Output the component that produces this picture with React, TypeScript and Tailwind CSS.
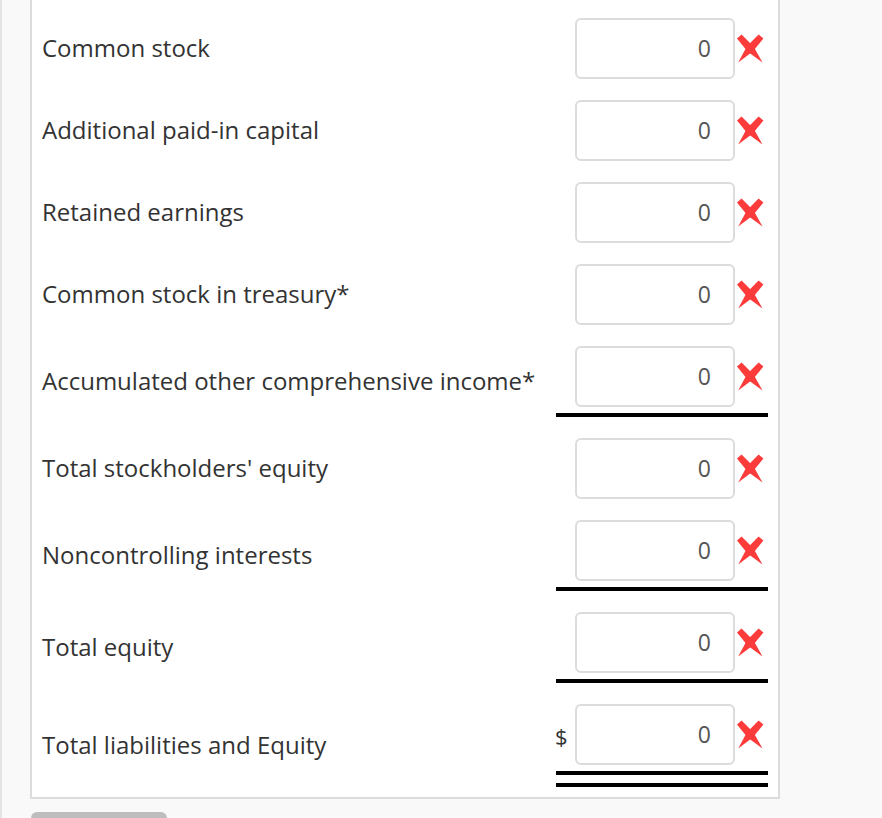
import React from "react";

type Row = { label: string; dollar?: boolean; lines?: 0 | 1 | 2 };

const rows: Row[] = [
  { label: "Common stock" },
  { label: "Additional paid-in capital" },
  { label: "Retained earnings" },
  { label: "Common stock in treasury*" },
  { label: "Accumulated other comprehensive income*", lines: 1 },
  { label: "Total stockholders' equity" },
  { label: "Noncontrolling interests", lines: 1 },
  { label: "Total equity", lines: 1 },
  { label: "Total liabilities and Equity", dollar: true, lines: 2 },
];

function RedX() {
  return (
    <svg width="27" height="29" viewBox="0 0 27 29" className="block">
      <polygon points="4.6,0.5 16.5,12.4 25.5,28.5 10.5,17.6 0,4.6" fill="#fc3b3b" />
      <polygon points="21.6,0.5 26.4,4.6 15.8,17.6 1.2,28.5 9.8,12.4" fill="#fc3b3b" />
    </svg>
  );
}

export default function App() {
  return (
    <div
      className="min-h-[818px] w-full bg-[#f9f9f9] border-l-2 border-[#e4e4e4] pl-[28px] overflow-hidden"
      style={{ fontFamily: '"Open Sans", "Liberation Sans", sans-serif' }}
    >
      <div className="w-[750px] bg-white border-x-2 border-b-2 border-[#dcdcdc] pt-[18px] pb-[10px] pl-[10px] pr-[10px] flex flex-col gap-[21px]">
        {rows.map((r) => (
          <div key={r.label} className="flex items-center">
            <div className="flex-1 text-[24px] leading-[32px] text-[#333] -mt-[2px]">{r.label}</div>
            <div className="w-[212px] flex flex-col">
              <div className="flex items-center">
                <div className="w-[20px] text-[22px] text-[#333] leading-none -ml-[1px] mt-[2px]">
                  {r.dollar ? "$" : ""}
                </div>
                <div className="w-[160px] h-[61px] border-2 border-[#dcdcdc] rounded-[6px] flex items-center justify-end pr-[22px] text-[23px] text-[#555]">
                  0
                </div>
                <div className="ml-[2px] mt-[-1px]">
                  <RedX />
                </div>
              </div>
              {r.lines ? <div className="mt-[6px] h-[4px] bg-black" /> : null}
              {r.lines === 2 ? <div className="mt-[8px] h-[4px] bg-black" /> : null}
            </div>
          </div>
        ))}
      </div>
      <div className="mt-[13px] ml-[1px] w-[136px] h-[20px] bg-[#bdbdbd] rounded-t-[6px]" />
    </div>
  );
}
